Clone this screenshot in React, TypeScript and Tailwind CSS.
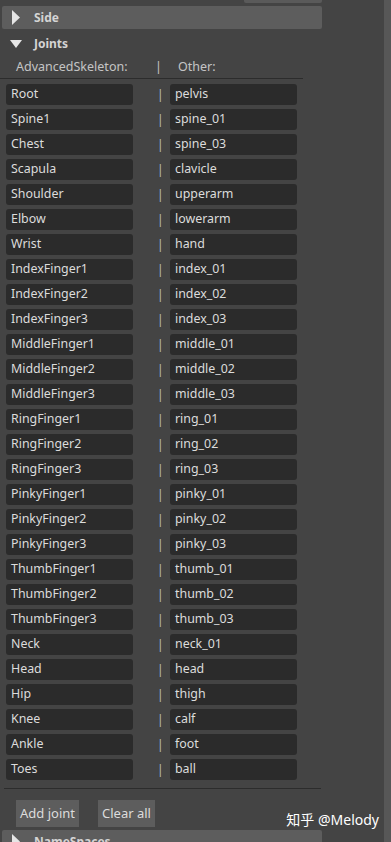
const rows: [string, string][] = [
  ["Root", "pelvis"],
  ["Spine1", "spine_01"],
  ["Chest", "spine_03"],
  ["Scapula", "clavicle"],
  ["Shoulder", "upperarm"],
  ["Elbow", "lowerarm"],
  ["Wrist", "hand"],
  ["IndexFinger1", "index_01"],
  ["IndexFinger2", "index_02"],
  ["IndexFinger3", "index_03"],
  ["MiddleFinger1", "middle_01"],
  ["MiddleFinger2", "middle_02"],
  ["MiddleFinger3", "middle_03"],
  ["RingFinger1", "ring_01"],
  ["RingFinger2", "ring_02"],
  ["RingFinger3", "ring_03"],
  ["PinkyFinger1", "pinky_01"],
  ["PinkyFinger2", "pinky_02"],
  ["PinkyFinger3", "pinky_03"],
  ["ThumbFinger1", "thumb_01"],
  ["ThumbFinger2", "thumb_02"],
  ["ThumbFinger3", "thumb_03"],
  ["Neck", "neck_01"],
  ["Head", "head"],
  ["Hip", "thigh"],
  ["Knee", "calf"],
  ["Ankle", "foot"],
  ["Toes", "ball"],
]

function TriRight() {
  return (
    <svg width="8" height="15" viewBox="0 0 8 15" aria-hidden>
      <path d="M0 0 L8 7.5 L0 15 Z" fill="#e6e6e6" />
    </svg>
  )
}

function TriDown() {
  return (
    <svg width="12" height="8" viewBox="0 0 12 8" aria-hidden>
      <path d="M0 0 L12 0 L6 8 Z" fill="#e6e6e6" />
    </svg>
  )
}

function Field({ text }: { text: string }) {
  return (
    <div className="flex h-[21px] w-[127px] items-center rounded-[3px] bg-[#2b2b2b] pl-[5px] text-[12.4px] text-[#dcdcdc]">
      {text}
    </div>
  )
}

export default function App() {
  return (
    <div
      className="relative flex h-[842px] w-[391px] items-start overflow-hidden bg-[#444444]"
      style={{ fontFamily: '"Noto Sans", "Noto Sans CJK SC", sans-serif' }}
    >
      <div className="flex w-[384px] shrink-0 flex-col [&>*]:shrink-0">
        {/* sliver of the field above */}
        <div className="flex h-[3px]">
          <div className="ml-[244px] h-[3px] w-[78px] rounded-b-[2px] bg-[#5a5a5a]" />
        </div>

        <div className="ml-[2px] mt-[3px] flex h-[23px] w-[320px] items-center rounded-[2px] bg-[#5d5d5d]">
          <div className="ml-[10px] flex">
            <TriRight />
          </div>
          <span className="ml-[14px] text-[12px] font-bold text-[#d4d4d4]">Side</span>
        </div>

        <div className="mt-[3px] flex h-[24px] items-center">
          <div className="ml-[10px] flex">
            <TriDown />
          </div>
          <span className="ml-[12px] text-[12px] font-bold text-[#d4d4d4]">Joints</span>
        </div>

        <div className="flex h-[22px] items-center text-[12.5px] text-[#c4c4c4]">
          <span className="ml-[16px] w-[139px]">AdvancedSkeleton:</span>
          <span className="w-[23px]">|</span>
          <span>Other:</span>
        </div>
        <div className="h-px w-[303px] bg-[#2c2c2c]" />

        <div className="mt-[5px] flex flex-col gap-[4px]">
          {rows.map(([a, b]) => (
            <div key={a} className="flex items-center">
              <div className="ml-[6px]">
                <Field text={a} />
              </div>
              <span className="w-[37px] pl-[24px] text-[12px] text-[#bdbdbd]">|</span>
              <Field text={b} />
            </div>
          ))}
        </div>

        <div className="ml-[4px] mt-[8px] h-px w-[317px] bg-[#2c2c2c]" />

        <div className="mt-[11px] flex h-[27px] items-center gap-[19px] pl-[16px] text-[13px] text-[#dcdcdc]">
          <div className="flex h-[27px] w-[63px] items-center justify-center bg-[#5d5d5d]">Add joint</div>
          <div className="flex h-[27px] w-[57px] items-center justify-center bg-[#5d5d5d]">Clear all</div>
        </div>

        <div className="ml-[2px] mt-[3px] flex h-[23px] w-[320px] items-center rounded-[2px] bg-[#5d5d5d]">
          <div className="ml-[10px] flex">
            <TriRight />
          </div>
          <span className="ml-[14px] text-[12px] font-bold text-[#d4d4d4]">NameSpaces</span>
        </div>
      </div>

      <div className="h-[842px] w-[7px] shrink-0 bg-[#575757]" />

      <div className="absolute right-[12px] top-[809px] text-[14px] text-white">
        知乎 @Melody
      </div>
    </div>
  )
}
